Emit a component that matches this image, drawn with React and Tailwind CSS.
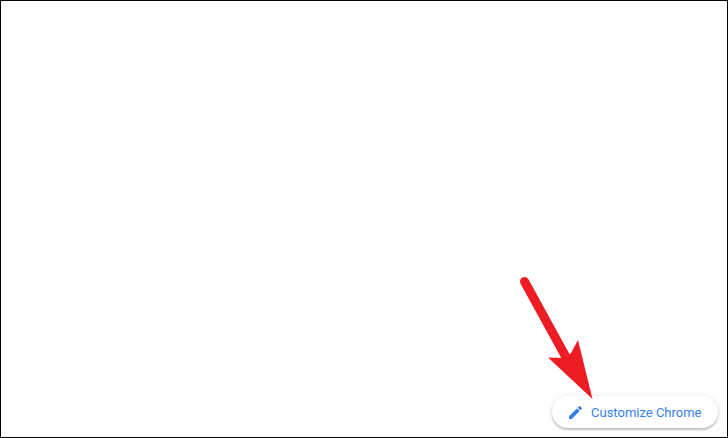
export default function App() {
  return (
    <div className="relative w-[728px] h-[438px] bg-white border border-black flex items-end justify-end pr-[9px] pb-[9px] font-['Roboto',sans-serif] overflow-hidden">
      <button className="flex items-center w-[166px] h-[32px] rounded-full bg-white pl-[15px] gap-[7px] text-[#3480e6] text-[13px] shadow-[0_2px_2px_0_rgba(0,0,0,0.2),0_0_4px_2px_rgba(0,0,0,0.06)]">
        <svg width="17" height="17" viewBox="0 0 24 24" fill="#2f7de1" className="shrink-0">
          <path d="M3 17.25V21h3.75L17.81 9.94l-3.75-3.75L3 17.25zM20.71 7.04a1 1 0 0 0 0-1.41l-2.34-2.34a1 1 0 0 0-1.41 0l-1.83 1.83 3.75 3.75 1.83-1.83z" />
        </svg>
        <span className="pt-[2px]">Customize Chrome</span>
      </button>
      <svg className="absolute left-[510px] top-[268px]" width="100" height="150" viewBox="510 268 100 150">
        <line x1="523.5" y1="280.5" x2="566" y2="358" stroke="#ee1c25" strokeWidth="9" strokeLinecap="round" />
        <polygon points="577,339 591.5,398 547,356.5 563,357 570,352" fill="#ee1c25" />
      </svg>
    </div>
  );
}
